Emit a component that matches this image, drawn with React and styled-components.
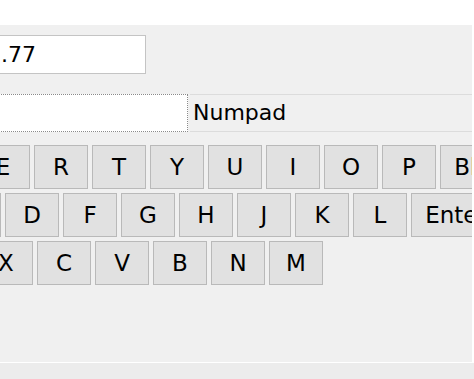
import React from "react";
import styled, { createGlobalStyle } from "styled-components";

const rows = [
  { offset: -24, keys: ["E", "R", "T", "Y", "U", "I", "O", "P", { label: "Bksp", wide: 84 }] },
  { offset: -53, keys: ["S", "D", "F", "G", "H", "J", "K", "L", { label: "Enter", wide: 90 }] },
  { offset: -21, keys: ["X", "C", "V", "B", "N", "M"] },
];

const App = () => {
  return (
    <Window>
      <GlobalStyle />
      <Panel>
        <ValueField>1.77</ValueField>
        <SearchRow>
          <SearchField />
          <ModeButton>Numpad</ModeButton>
        </SearchRow>
        <Keyboard>
          {rows.map((row, i) => (
            <KeyRow key={i} $offset={row.offset}>
              {row.keys.map((k) =>
                typeof k === "string" ? (
                  <Key key={k}>{k}</Key>
                ) : (
                  <Key key={k.label} $width={k.wide}>
                    {k.label}
                  </Key>
                )
              )}
            </KeyRow>
          ))}
        </Keyboard>
      </Panel>
      <StatusBar />
    </Window>
  );
};

const GlobalStyle = createGlobalStyle`
  html, body {
    margin: 0;
    padding: 0;
    background: #ffffff;
  }
  body {
    font-family: "DejaVu Sans", sans-serif;
  }
`;

const Window = styled.div`
  width: 474px;
  height: 379px;
  overflow: hidden;
  background: #ffffff;
  display: flex;
  flex-direction: column;
`;

const Panel = styled.div`
  margin-top: 25px;
  width: 472px;
  height: 337px;
  box-sizing: border-box;
  padding-top: 10px;
  background: #f0f0f0;
  overflow: hidden;
  display: flex;
  flex-direction: column;
`;

const ValueField = styled.div`
  margin-left: -40px;
  width: 186px;
  height: 39px;
  box-sizing: border-box;
  border: 1px solid #c4c4c4;
  background: #ffffff;
  padding-left: 26px;
  font-size: 22px;
  line-height: 37px;
  color: #000;
`;

const SearchRow = styled.div`
  margin-top: 20px;
  height: 38px;
  display: flex;
  align-items: stretch;
  gap: 2px;
`;

const SearchField = styled.div`
  margin-left: -60px;
  width: 248px;
  box-sizing: border-box;
  border: 1px dotted #8a8a8a;
  background: #ffffff;
`;

const ModeButton = styled.div`
  flex: 1;
  box-sizing: border-box;
  border-top: 1px solid #dcdcdc;
  border-bottom: 1px solid #dcdcdc;
  padding-left: 3px;
  font-size: 22px;
  line-height: 36px;
  color: #000;
`;

const Keyboard = styled.div`
  margin-top: 13px;
  display: flex;
  flex-direction: column;
  gap: 4px;
`;

const KeyRow = styled.div`
  display: flex;
  gap: 4px;
  margin-left: ${(p) => p.$offset}px;
`;

const Key = styled.div`
  flex: none;
  width: ${(p) => p.$width || 54}px;
  height: 44px;
  box-sizing: border-box;
  border: 1px solid #b9b9b9;
  background: #e1e1e1;
  display: flex;
  align-items: center;
  justify-content: center;
  font-size: 23px;
  color: #000;
`;

const StatusBar = styled.div`
  margin-top: 1px;
  flex: 1;
  width: 474px;
  background: #ececec;
`;

export default App;
